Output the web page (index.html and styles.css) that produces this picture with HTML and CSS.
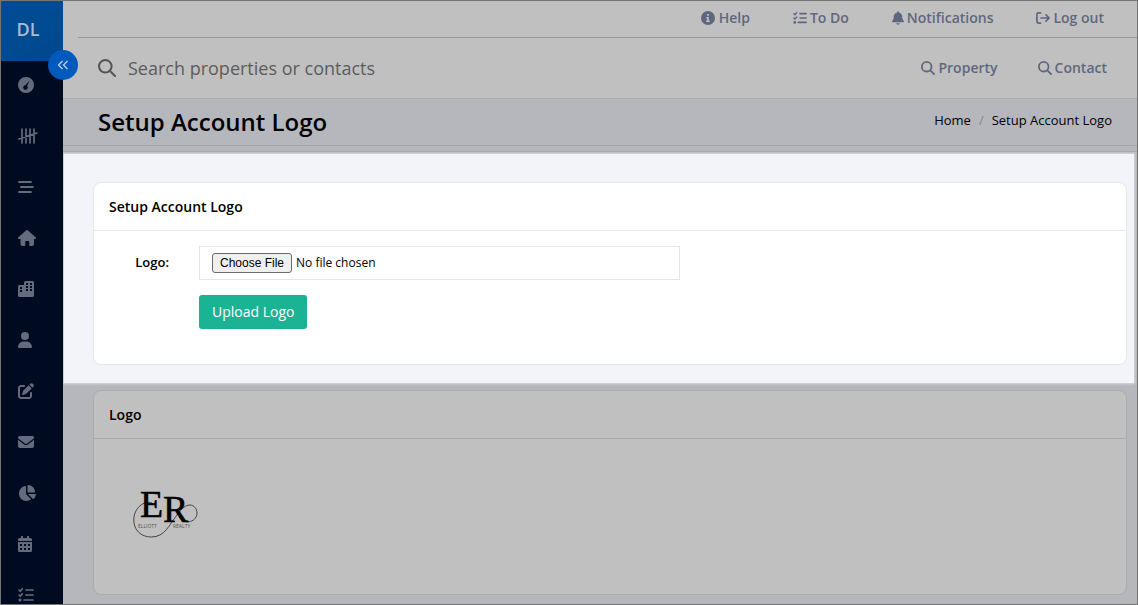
FILE: index.html
```html
<!DOCTYPE html>
<html lang="en">
<head>
<meta charset="UTF-8">
<meta name="viewport" content="width=device-width, initial-scale=1.0">
<title>Setup Account Logo</title>
<link rel="stylesheet" href="styles.css">
</head>
<body>
<div class="app">
    <nav class="sidebar">
        <a href="#" class="brand">DL</a>
        <button type="button" class="toggle" aria-label="Collapse menu">
            <svg width="12" height="10" viewBox="0 0 12 10" fill="none" stroke="currentColor" stroke-width="1.3"><path d="M5.5 1 1.5 5l4 4M10.5 1l-4 4 4 4"/></svg>
        </button>
        <ul class="menu">
            <li><a href="#" aria-label="Dashboard"><svg width="16" height="16" viewBox="0 0 16 16"><path fill-rule="evenodd" d="M8 0a8 8 0 1 0 0 16A8 8 0 0 0 8 0zm3.6 3.5-2.5 5.4a2.3 2.3 0 1 1-1.700-.7z"/></svg></a></li>
            <li><a href="#" aria-label="Tally"><svg width="20" height="16" viewBox="0 0 20 16" fill="none" stroke="currentColor" stroke-width="1.7" stroke-linecap="round"><path d="M4 1v14M8 1v14M12 1v14M16 1v14M1 11 19 5"/></svg></a></li>
            <li><a href="#" aria-label="Activity"><svg width="16" height="12" viewBox="0 0 16 12" fill="none" stroke="currentColor" stroke-width="1.8" stroke-linecap="round"><path d="M1 1h12M3 6h12M1 11h12"/></svg></a></li>
            <li><a href="#" aria-label="Home"><svg width="18" height="16" viewBox="0 0 576 512"><path d="M575.8 255.500c0 18-15 32.100-32 32.100h-32l.7 160.200c0 36-28 64.200-64 64.200h-56c-18 0-32-14-32-32V384c0-18-14-32-32-32h-64c-18 0-32 14-32 32v96c0 18-14 32-32 32h-56c-36 0-64-28-64-64V287.600H32c-18 0-32-14-32-32.100 0-9 3-17 10-24L266.400 8c7-7 15-8 22-8s15 2 21 7l255.400 224.500c8 7 12 15 11 24z"/></svg></a></li>
            <li><a href="#" aria-label="Buildings"><svg width="16" height="16" viewBox="0 0 16 16"><path fill-rule="evenodd" d="M7.500 0h7A1.500 1.500 0 0 1 16 1.500v13a1.500 1.500 0 0 1-1.500 1.500h-13A1.500 1.500 0 0 1 0 14.500v-9A1.500 1.500 0 0 1 1.500 4H6V1.500A1.500 1.500 0 0 1 7.500 0zM8 2v2h2V2zm4 0v2h2V2zM8 5v2h2V5zm4 0v2h2V5zM8 8v2h2V8zm4 0v2h2V8zM2 6v2h2V6zm0 3v2h2V9z"/></svg></a></li>
            <li><a href="#" aria-label="Contacts"><svg width="14" height="16" viewBox="0 0 448 512"><path d="M224 256a128 128 0 1 0 0-256 128 128 0 1 0 0 256zm-45.700 48C79.800 304 0 383.800 0 482.300 0 498.700 13.300 512 29.700 512h388.600c16.400 0 29.700-13.300 29.700-29.700C448 383.800 368.200 304 269.700 304z"/></svg></a></li>
            <li><a href="#" aria-label="Edit"><svg width="16" height="16" viewBox="0 0 512 512"><path d="M471.600 21.700c-21.900-21.900-57.300-21.900-79.200 0L362.300 51.700l97.900 97.900 30.100-30.100c21.900-21.900 21.900-57.300 0-79.200zM172.400 241.700c-6.100 6.100-10.800 13.600-13.500 21.900l-29.600 88.800c-2.900 8.600-.6 18.100 5.800 24.600s15.900 8.700 24.600 5.800l88.800-29.600c8.200-2.700 15.700-7.400 21.900-13.500L437.700 172.300 339.700 74.300zM96 64c-53 0-96 43-96 96v256c0 53 43 96 96 96h256c53 0 96-43 96-96v-96c0-17.700-14.300-32-32-32s-32 14.300-32 32v96c0 17.700-14.300 32-32 32H96c-17.700 0-32-14.300-32-32V160c0-17.700 14.300-32 32-32h96c17.700 0 32-14.300 32-32s-14.300-32-32-32z"/></svg></a></li>
            <li><a href="#" aria-label="Mail"><svg width="16" height="12" viewBox="0 0 16 12"><path d="M1.500 0h13A1.500 1.500 0 0 1 16 1.500v.8L9.200 7.500a2 2 0 0 1-2.400 0L0 2.300v-.8A1.500 1.500 0 0 1 1.500 0zM0 3.700l6.100 4.700a3.200 3.200 0 0 0 3.800 0L16 3.700V10a2 2 0 0 1-2 2H2a2 2 0 0 1-2-2z"/></svg></a></li>
            <li><a href="#" aria-label="Reports"><svg width="18" height="16" viewBox="0 0 576 512"><path d="M304 240V16.600c0-9 7-16.600 16-16.600 123.700 0 224 100.300 224 224 0 9-7.600 16-16.600 16zM32 272C32 150.700 122.100 50.300 239 34.300c9.200-1.300 17 6.100 17 15.400V288l156.500 156.500c6.700 6.700 6.200 17.700-1.500 23.100C371.800 495.600 323.800 512 272 512 139.500 512 32 404.600 32 272zm526.400 16c9.300 0 16.600 7.800 15.400 17-7.700 55.900-34.600 105.600-73.900 142.300-6 5.600-15.400 5.200-21.200-.7L320 288z"/></svg></a></li>
            <li><a href="#" aria-label="Calendar"><svg width="14" height="16" viewBox="0 0 14 16"><path fill-rule="evenodd" d="M3 0h2v2h4V0h2v2h1.500A1.500 1.500 0 0 1 14 3.500V5H0V3.500A1.500 1.500 0 0 1 1.500 2H3zM0 6h14v8.500a1.500 1.500 0 0 1-1.500 1.500h-11A1.500 1.500 0 0 1 0 14.500zm2 2v2h2V8zm4 0v2h2V8zm4 0v2h2V8zm-8 4v2h2v-2zm4 0v2h2v-2zm4 0v2h2v-2z"/></svg></a></li>
            <li><a href="#" aria-label="Tasks"><svg width="16" height="14" viewBox="0 0 16 14" fill="none" stroke="currentColor" stroke-width="1.700" stroke-linecap="round"><path d="M8 2h7M8 7h7M6 12h9"/><path stroke-width="1.600" stroke-linejoin="round" d="m1 2 1.200 1.300L4.300.9M1 7l1.200 1.300 2.100-2.400"/><circle cx="2" cy="12" r=".7"/></svg></a></li>
        </ul>
    </nav>

    <div class="main">
        <header>
            <div class="top-links">
                <a href="#"><svg width="14" height="14" viewBox="0 0 14 14"><path fill-rule="evenodd" d="M7 0a7 7 0 1 0 0 14A7 7 0 0 0 7 0zM6.100 3h1.800v1.800H6.100zM5.200 6h2.600v3.500h1V11H5.200V9.500h1v-2h-1z"/></svg><span class="wide">Help</span></a>
                <a href="#"><svg width="14" height="14" viewBox="0 0 16 14" fill="none" stroke="currentColor" stroke-width="1.900" stroke-linecap="round"><path d="M8 2h7M8 7h7M6 12h9"/><path stroke-width="1.600" stroke-linejoin="round" d="m1 2 1.200 1.300L4.300.9M1 7l1.200 1.300 2.100-2.400"/><circle cx="2" cy="12" r=".7"/></svg><span>To Do</span></a>
                <a href="#"><svg width="12" height="14" viewBox="0 0 448 512"><path d="M224 0c-17.700 0-32 14.300-32 32v19.200C119 66 64 130.600 64 208v18.800c0 47-17.300 92.400-48.500 127.600l-7.400 8.300c-8.400 9.400-10.400 22.900-5.300 34.400S19.400 416 32 416h384c12.600 0 24-7.400 29.200-18.900s3.100-25-5.300-34.400l-7.400-8.300C401.300 319.200 384 273.900 384 226.800V208c0-77.400-55-142-128-156.800V32c0-17.700-14.300-32-32-32zm45.300 493.300c12-12 18.700-28.300 18.700-45.300H160c0 17 6.700 33.300 18.700 45.300S207 512 224 512s33.300-6.700 45.300-18.700z"/></svg><span>Notifications</span></a>
                <a href="#"><svg width="14" height="12" viewBox="0 0 14 12" fill="none" stroke="currentColor" stroke-width="1.700" stroke-linecap="round" stroke-linejoin="round"><path d="M4.500.9H2.400A1.500 1.500 0 0 0 .9 2.400v7.200a1.500 1.500 0 0 0 1.500 1.500h2.100M5 6h8M10 2.800 13.100 6 10 9.200"/></svg><span>Log out</span></a>
            </div>
            <form class="search-bar">
                <label for="search" aria-label="Search"><svg width="18" height="18" viewBox="0 0 18 18" fill="none" stroke="currentColor" stroke-width="2" stroke-linecap="round"><circle cx="7.300" cy="7.300" r="6.300"/><path d="m12 12 5 5"/></svg></label>
                <input type="text" id="search" placeholder="Search properties or contacts">
                <div class="search-links">
                    <a href="#"><svg width="14" height="14" viewBox="0 0 14 14" fill="none" stroke="currentColor" stroke-width="1.800" stroke-linecap="round"><circle cx="5.700" cy="5.700" r="4.800"/><path d="m9.300 9.300 3.800 3.800"/></svg><span>Property</span></a>
                    <a href="#"><svg width="14" height="14" viewBox="0 0 14 14" fill="none" stroke="currentColor" stroke-width="1.800" stroke-linecap="round"><circle cx="5.700" cy="5.700" r="4.800"/><path d="m9.300 9.300 3.800 3.800"/></svg><span>Contact</span></a>
                </div>
            </form>
        </header>

        <div class="page-heading">
            <h1>Setup Account Logo</h1>
            <ol class="breadcrumb">
                <li><a href="#">Home</a></li>
                <li><a href="#">Setup Account Logo</a></li>
            </ol>
        </div>
        <div class="divider"></div>

        <section class="spotlight">
            <div class="card">
                <h2>Setup Account Logo</h2>
                <form class="upload-form">
                    <label for="logoFile">Logo:</label>
                    <input type="file" id="logoFile">
                    <button type="button" class="upload-btn">Upload Logo</button>
                </form>
            </div>
        </section>

        <section class="current">
            <div class="card card-dim">
                <h2>Logo</h2>
                <div class="logo-preview">
                    <svg width="66" height="64" viewBox="0 -10 66 64" role="img" aria-label="Elliott Realty">
                        <g fill="none" stroke="#444" stroke-width="1">
                            <path d="M19 11C11 8 .8 16 .8 28c0 10 7 17 17.500 17C32 45 36 33 44 23c5-7 9-10 13-10 4 0 7 4 7 8 0 8-11 13-18 4"/>
                        </g>
                        <text x="7" y="25" class="logo-letters">E</text>
                        <text x="30" y="30" class="logo-letters">R</text>
                        <text x="5" y="36" class="logo-name">ELLIOTT</text>
                        <text x="40" y="36" class="logo-name">REALTY</text>
                    </svg>
                </div>
            </div>
        </section>
    </div>
</div>
</body>
</html>
```
FILE: styles.css
```css
* {
    box-sizing: border-box;
}
body {
    margin: 0;
    font-family: 'Open Sans', 'Liberation Sans', sans-serif;
    font-size: 13px;
    color: #000;
}
a {
    color: inherit;
    text-decoration: none;
}
svg {
    display: block;
    flex: none;
}
svg:not([fill]) {
    fill: currentColor;
}
h1, h2 {
    margin: 0;
    font-weight: 600;
}
.app {
    display: flex;
    height: 100vh;
    overflow: hidden;
    border: 1px solid #757575;
    background-color: #b5b7bc;
}

/* sidebar */
.sidebar {
    position: relative;
    flex: none;
    width: 62px;
    background-color: #000a21;
}
.brand {
    display: flex;
    align-items: center;
    justify-content: center;
    height: 60px;
    padding: 0 8px 4px 0;
    background: linear-gradient(150deg, #004b94 0%, #004a92 70%, #004890 70%, #004890 100%);
    color: #a9bccf;
    font-size: 18px;
    font-weight: 600;
}
.toggle {
    position: absolute;
    top: 49px;
    right: -15px;
    display: flex;
    align-items: center;
    justify-content: center;
    width: 30px;
    height: 30px;
    padding: 0;
    border: none;
    border-radius: 50%;
    background-color: #005abc;
    color: #bfd0e4;
    cursor: pointer;
}
.menu {
    margin: 0;
    padding: 0;
    list-style: none;
    color: #636b7f;
}
.menu a {
    display: flex;
    align-items: center;
    height: 51px;
    padding: 0 0 4px 17px;
}

/* header */
.main {
    flex: 1;
    min-width: 0;
    overflow: hidden;
}
header {
    background-color: #c0c0c0;
    border-bottom: 1px solid #a8aaae;
    color: #5f677e;
    font-size: 14px;
    font-weight: 600;
}
.top-links {
    display: flex;
    align-items: center;
    justify-content: flex-end;
    gap: 43px;
    height: 37px;
    margin-left: 15px;
    padding: 0 33px 2px 0;
    border-bottom: 1px solid #969799;
}
header a {
    display: flex;
    align-items: center;
    gap: 3px;
    line-height: 20px;
}
.wide {
    padding-left: 1px;
}
.search-bar {
    display: flex;
    align-items: center;
    height: 60px;
    padding: 0 30px 0 35px;
}
.search-bar label {
    color: #545454;
}
.search-bar input {
    flex: 1;
    min-width: 0;
    padding: 0 12px;
    border: none;
    outline: none;
    background: none;
    font-family: inherit;
    font-size: 18px;
}
.search-bar input::placeholder {
    color: #5c5c5c;
}
.search-links {
    display: flex;
    gap: 40px;
}

/* page heading */
.page-heading {
    display: flex;
    align-items: center;
    justify-content: space-between;
    height: 47px;
    padding: 0 25px 0 35px;
    border-bottom: 1px solid #a3a5a9;
}
.page-heading h1 {
    font-size: 24px;
    line-height: 32px;
}
.breadcrumb {
    display: flex;
    margin: 0;
    padding: 0 0 4px;
    list-style: none;
}
.breadcrumb li + li::before {
    content: "/";
    padding: 0 8px;
    color: #85878b;
}
.divider {
    height: 6px;
    border-bottom: 1px solid #a3a5a9;
}

/* content */
.spotlight {
    margin: 2px 3px 0 1px;
    padding: 28px 7px 18px 29px;
    background-color: #f3f4f9;
    box-shadow: 0 0 2px 1px #d8d9dd;
}
.current {
    padding: 7px 10px 9px 30px;
}
.card {
    min-height: 183px;
    border: 1px solid #e5e7eb;
    border-radius: 8px;
    background-color: #fff;
}
.card h2 {
    padding: 14px 15px 13px;
    border-bottom: 1px solid #e5e7eb;
    font-size: 14px;
    line-height: 20px;
}
.card.card-dim,
.card-dim h2 {
    border-color: #a9abae;
}
.card-dim {
    min-height: 205px;
    background-color: #c0c0c0;
}
.upload-form {
    display: grid;
    grid-template-columns: 75px minmax(0, 481px);
    gap: 15px 30px;
    align-items: center;
    padding: 15px 0;
}
.upload-form label {
    padding-bottom: 2px;
    text-align: right;
    font-weight: 600;
}
.upload-form input {
    width: 100%;
    height: 34px;
    padding: 6px 12px;
    border: 1px solid #e5e6e7;
    font-family: inherit;
    font-size: 12px;
    line-height: 20px;
}
.upload-form input::file-selector-button {
    height: 20px;
    padding: 0 7px;
    border: 1px solid #6b6b6b;
    border-radius: 3px;
    background-color: #efefef;
    font-family: 'Liberation Sans', Arial, sans-serif;
    font-size: 12px;
}
.upload-btn {
    grid-column: 2;
    justify-self: start;
    height: 34px;
    padding: 0 13px 2px;
    border: none;
    border-radius: 3px;
    background-color: #1ab394;
    color: #fff;
    font-family: inherit;
    font-size: 14px;
    cursor: pointer;
}
.logo-preview {
    padding: 43px 39px;
}
.logo-letters {
    font-family: 'Liberation Serif', serif;
    font-size: 38px;
    stroke: #000;
    stroke-width: 0.5;
}
.logo-name {
    font-size: 5px;
    fill: #555;
}
```
